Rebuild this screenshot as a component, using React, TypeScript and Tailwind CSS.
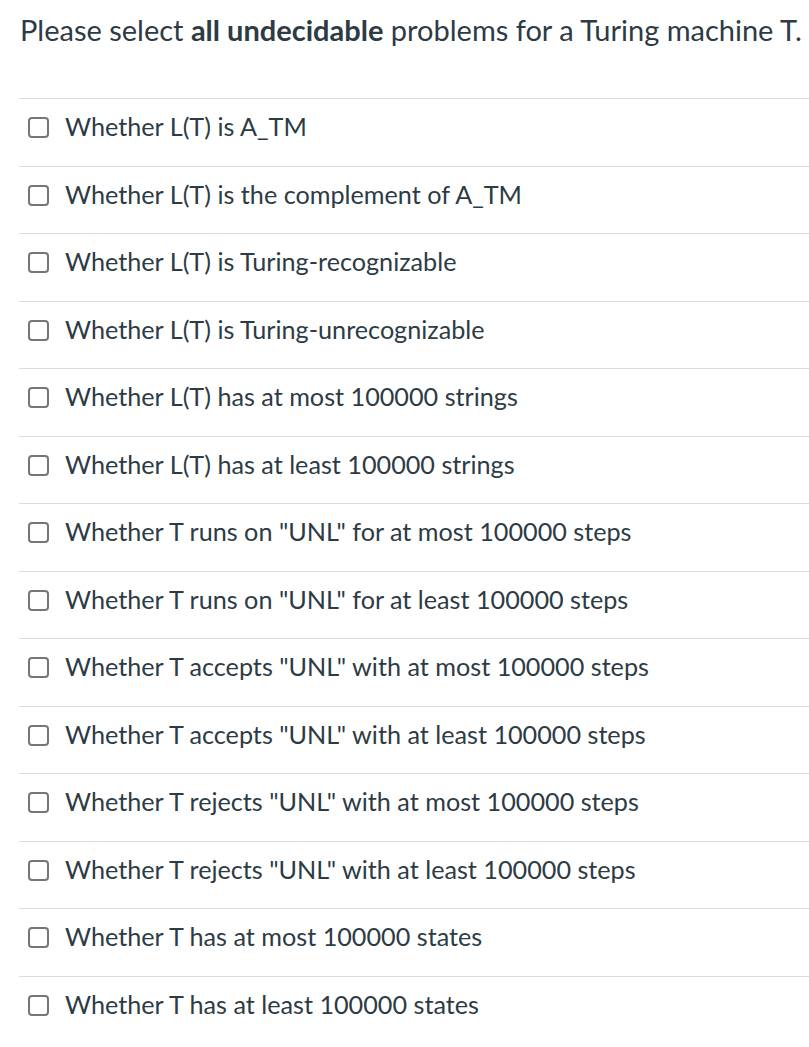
const options = [
  "Whether L(T) is A_TM",
  "Whether L(T) is the complement of A_TM",
  "Whether L(T) is Turing-recognizable",
  "Whether L(T) is Turing-unrecognizable",
  "Whether L(T) has at most 100000 strings",
  "Whether L(T) has at least 100000 strings",
  'Whether T runs on "UNL" for at most 100000 steps',
  'Whether T runs on "UNL" for at least 100000 steps',
  'Whether T accepts "UNL" with at most 100000 steps',
  'Whether T accepts "UNL" with at least 100000 steps',
  'Whether T rejects "UNL" with at most 100000 steps',
  'Whether T rejects "UNL" with at least 100000 steps',
  "Whether T has at most 100000 states",
  "Whether T has at least 100000 states",
];

export default function App() {
  return (
    <div className="w-[809px] min-h-[1047px] bg-white text-[#2d3b45] font-['Lato','Liberation_Sans',sans-serif]">
      <div className="h-[98px] pl-[20px] pt-[13px]">
        <p className="text-[29px] leading-[1.2] whitespace-nowrap">
          Please select <strong className="font-bold">all undecidable</strong> problems for a Turing machine T.
        </p>
      </div>
      <div className="ml-[19px]">
        {options.map((opt) => (
          <label
            key={opt}
            className="flex h-[67.5px] border-t border-[#dcdcdc] pt-[12px] pl-[9px] items-start"
          >
            <span className="mt-[6px] w-[21px] h-[21px] shrink-0 rounded-[4px] border-2 border-[#767676] bg-white" />
            <span className="ml-[16px] text-[25.2px] leading-[1.2] whitespace-nowrap">{opt}</span>
          </label>
        ))}
      </div>
    </div>
  );
}
